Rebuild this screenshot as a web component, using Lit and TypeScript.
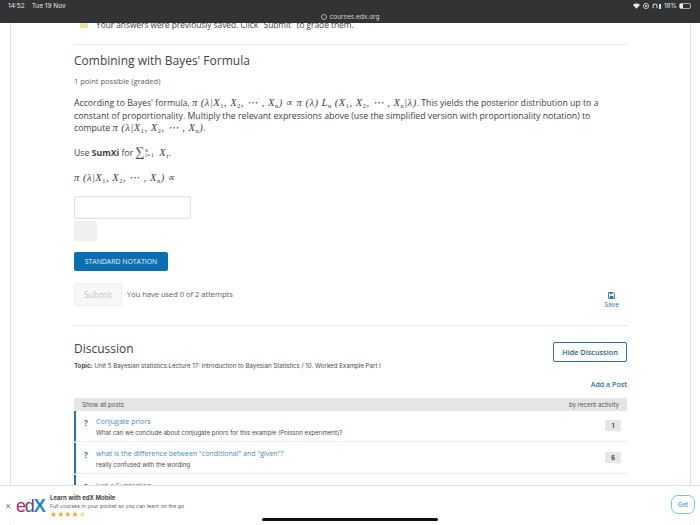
import { LitElement, css, html } from 'lit';
import { customElement } from 'lit/decorators.js';

const mathSeq = html`<span class="m">π (λ|X<sub>1</sub>, X<sub>2</sub>, ⋯ , X<sub>n</sub>)</span>`;

@customElement('app-root')
export class AppRoot extends LitElement {
  render() {
    return html`
      <div class="bar">
        <div class="status">
          <span>14:52</span><span class="date">Tue 19 Nov</span>
          <span class="status-icons">
            <svg width="7" height="6" viewBox="0 0 9 7"><path d="M0 2.2a6.4 6.4 0 0 1 9 0L4.5 7z" fill="#eee"/></svg>
            <svg width="6" height="6" viewBox="0 0 7 7"><circle cx="3.5" cy="3.5" r="3" fill="none" stroke="#ddd"/><circle cx="3.5" cy="3.5" r="1.3" fill="#ddd"/></svg>
            <svg width="6" height="6" viewBox="0 0 6 7"><path d="M.7 6V3.4a2.3 2.3 0 0 1 4.6 0V6" fill="none" stroke="#ddd" stroke-width="1.2"/></svg>
            <i class="lock"></i>
            <span>18%</span>
            <span class="batt"><i></i></span>
          </span>
        </div>
        <div class="url">
          <svg width="6" height="6" viewBox="0 0 6 6"><circle cx="3" cy="3" r="2.5" fill="none" stroke="#ccc" stroke-width=".8"/></svg>
          courses.edx.org
        </div>
      </div>

      <main class="page">
        <div class="saved">
          <svg width="8" height="8" viewBox="0 0 8 8"><rect width="8" height="8" fill="#efe3a0"/><rect x="2" y="0" width="4" height="3" fill="#fbf6da"/></svg>
          <span>Your answers were previously saved. Click "Submit" to grade them.</span>
        </div>
        <hr />
        <h2>Combining with Bayes' Formula</h2>
        <div class="points">1 point possible (graded)</div>
        <p class="body">
          According to Bayes' formula, ${mathSeq} <span class="m">∝ π (λ) L<sub>n</sub> (X<sub>1</sub>, X<sub>2</sub>, ⋯ , X<sub>n</sub>|λ)</span>. This yields the posterior distribution up to a
          constant of proportionality. Multiply the relevant expressions above (use the simplified version with proportionality notation) to
          compute ${mathSeq}.
        </p>
        <p class="use">Use <b>SumXi</b> for <span class="m"><span class="sigma">∑</span><span class="limits"><sup>n</sup><sub>i=1</sub></span> X<sub>i</sub></span>.</p>
        <p class="prop">${mathSeq} <span class="m">∝</span></p>
        <div class="input"></div>
        <div class="preview"></div>
        <button class="notation">STANDARD NOTATION</button>
        <div class="actions">
          <button class="submit">Submit</button>
          <span class="attempts">You have used 0 of 2 attempts</span>
          <span class="save">
            <svg width="7" height="7" viewBox="0 0 8 8"><path d="M.5.5h5.5l1.500 1.500v5.500h-7z" fill="none" stroke="#2d6f9f"/><rect x="2" y="4.500" width="4" height="3" fill="#2d6f9f"/><rect x="2" y=".5" width="3" height="2" fill="#2d6f9f"/></svg>
            Save
          </span>
        </div>
        <hr class="rule" />
        <div class="disc-head">
          <h2>Discussion</h2>
          <button class="hide">Hide Discussion</button>
        </div>
        <div class="topic"><b>Topic:</b> Unit 5 Bayesian statistics:Lecture 17: Introduction to Bayesian Statistics / 10. Worked Example Part I</div>
        <div class="add">Add a Post</div>
        <div class="posts">
          <div class="posts-head"><span>Show all posts</span><span>by recent activity</span></div>
          ${this.post('Conjugate priors', 'What can we conclude about conjugate priors for this example (Poisson experiment)?', '1')}
          ${this.post('what is the difference between "conditional" and "given"?', 'really confused with the wording', '6')}
          ${this.post('Just a Suggestion', '', '')}
        </div>
      </main>

      <div class="banner">
        <span class="close">×</span>
        <span class="logo"><span class="e">e</span><span class="d">d</span><span class="x">X</span></span>
        <div class="promo">
          <div class="promo-title">Learn with edX Mobile</div>
          <div class="promo-sub">Full courses in your pocket so you can learn on the go</div>
          <div class="stars">★★★★<span class="half">★</span></div>
        </div>
        <button class="get">Get</button>
      </div>
      <div class="home"></div>
    `;
  }

  private post(title: string, sub: string, count: string) {
    return html`
      <div class="post">
        <span class="q">?</span>
        <div class="post-text">
          <div class="post-title">${title}</div>
          <div class="post-sub">${sub}</div>
        </div>
        ${count ? html`<span class="count">${count}</span>` : ''}
      </div>
    `;
  }

  static styles = css`
    :host {
      display: block;
      position: relative;
      width: 700px;
      height: 525px;
      overflow: hidden;
      background: #fff;
      font-family: 'Open Sans', sans-serif;
      color: #414141;
    }

    .bar {
      position: absolute;
      top: 0;
      left: 0;
      right: 0;
      height: 23px;
      background: #323335;
      color: #ddd;
      z-index: 2;
    }
    .status {
      display: flex;
      align-items: center;
      gap: 7px;
      height: 12px;
      padding: 0 9px 0 8px;
      font: 6.5px 'Inter', sans-serif;
      color: #e4e4e4;
    }
    .status-icons {
      margin-left: auto;
      display: flex;
      align-items: center;
      gap: 3px;
    }
    .lock {
      width: 2px;
      height: 5px;
      margin-left: -2px;
      background: #ddd;
    }
    .batt {
      width: 12px;
      height: 6px;
      border: 1px solid #aaa;
      border-radius: 2px;
      margin-left: -1px;
      box-sizing: border-box;
    }
    .batt i {
      display: block;
      width: 3px;
      height: 4px;
      background: #eee;
    }
    .url {
      display: flex;
      justify-content: center;
      align-items: center;
      gap: 3px;
      height: 9px;
      font: 6.5px 'Inter', sans-serif;
      color: #d5d5d5;
    }

    .page {
      box-sizing: border-box;
      width: 681px;
      height: 525px;
      margin-left: 10px;
      padding: 18px 63px 0 63px;
      border-left: 1px solid #ddd;
      border-right: 1px solid #ddd;
    }
    .saved {
      display: flex;
      align-items: center;
      gap: 8px;
      padding-left: 6px;
      height: 12px;
      font-size: 8.3px;
      color: #414141;
    }
    hr {
      border: 0;
      border-top: 1px solid #e8e8e8;
      margin: 14px 0 0;
    }
    h2 {
      font-weight: 400;
      font-size: 12px;
      line-height: 18px;
      margin: 0;
      color: #414141;
    }
    hr + h2 {
      margin-top: 7px;
    }
    .points {
      font-size: 7.5px;
      line-height: 10px;
      color: #5c5c5c;
      margin-top: 6px;
    }
    p {
      margin: 0;
      font-size: 8.72px;
      line-height: 12.5px;
    }
    .body {
      margin-top: 11px;
    }
    .use {
      margin-top: 11px;
    }
    .prop {
      margin-top: 13px;
    }
    .m {
      font-family: 'Liberation Serif', serif;
      font-style: italic;
      font-size: 10.5px;
      letter-spacing: 0.5px;
      white-space: nowrap;
    }
    .m sub, .m sup {
      font-size: 6.5px;
      line-height: 0;
      font-style: normal;
      vertical-align: -1.5px;
    }
    .sigma {
      font-size: 13px;
      font-style: normal;
    }
    .limits {
      display: inline-flex;
      flex-direction: column;
      vertical-align: middle;
      line-height: 5px;
      margin-right: 2px;
    }
    .limits sup, .limits sub {
      font-size: 5.5px;
      line-height: 5px;
      vertical-align: baseline;
    }
    .input {
      box-sizing: border-box;
      width: 117px;
      height: 23px;
      margin-top: 11px;
      border: 1px solid #e2e2e2;
      border-radius: 2px;
      box-shadow: inset 0 0 2px #e6e6e6;
    }
    .preview {
      width: 23px;
      height: 20px;
      margin-top: 2px;
      background: #f0f0f0;
      border-radius: 2px;
    }
    button {
      font-family: inherit;
      padding: 0;
      box-sizing: border-box;
    }
    .notation {
      display: block;
      width: 94px;
      height: 19px;
      margin-top: 11px;
      border: 0;
      border-radius: 2px;
      background: #0a6fb0;
      color: #e6f0f7;
      font-size: 6.9px;
    }
    .actions {
      display: flex;
      align-items: center;
      height: 24px;
      margin-top: 12px;
    }
    .submit {
      width: 48px;
      height: 23px;
      background: #f7f7f7;
      border: 1px solid #eee;
      border-radius: 2px;
      color: #c4c4c4;
      font-size: 8.5px;
    }
    .attempts {
      margin-left: 5px;
      font-size: 7.5px;
      color: #5c5c5c;
      margin-top: -1px;
    }
    .save {
      margin-left: auto;
      margin-right: 8px;
      margin-top: 12px;
      display: flex;
      flex-direction: column;
      align-items: center;
      gap: 1px;
      font-size: 6.8px;
      line-height: 9px;
      color: #2d6f9f;
    }
    hr.rule {
      margin-top: 18px;
    }
    .disc-head {
      display: flex;
      justify-content: space-between;
      align-items: center;
      margin-top: 16px;
      height: 21px;
    }
    .disc-head h2 {
      margin-bottom: 6px;
    }
    .hide {
      width: 74px;
      height: 20px;
      background: #fff;
      border: 1px solid #2d6f9f;
      border-radius: 2px;
      color: #23608c;
      font-size: 7.3px;
      font-weight: 600;
    }
    .topic {
      margin-top: -1px;
      font: 6.15px/8px 'Inter', sans-serif;
      color: #4a4a4a;
    }
    .add {
      margin-top: 9px;
      text-align: right;
      font-size: 7.1px;
      line-height: 10px;
      font-weight: 600;
      color: #2d6f9f;
    }
    .posts {
      margin-top: 9px;
    }
    .posts-head {
      display: flex;
      justify-content: space-between;
      align-items: center;
      height: 13px;
      padding: 0 8px;
      background: #e5e5e5;
      font: 6.15px 'Inter', sans-serif;
      color: #555;
    }
    .post {
      display: flex;
      height: 31px;
      margin-bottom: 1px;
      box-sizing: border-box;
      border-left: 2px solid #2d6f9f;
      border-bottom: 1px solid #eee;
    }
    .q {
      width: 20px;
      padding: 6px 0 0 8px;
      box-sizing: border-box;
      font-size: 8px;
      font-weight: 700;
      color: #2d6f9f;
    }
    .post-text {
      flex: 1;
      padding-top: 5px;
    }
    .post-title {
      font-size: 7.05px;
      line-height: 11px;
      color: #4a8ab5;
    }
    .post-sub {
      margin-top: 2px;
      font: 6.1px/8px 'Inter', sans-serif;
      color: #4a4a4a;
    }
    .count {
      position: relative;
      align-self: flex-start;
      width: 16px;
      height: 11px;
      margin: 9px 6px 0 0;
      background: #e6e6e6;
      border-radius: 1px;
      text-align: center;
      font: 700 5.7px/11px 'Inter', sans-serif;
    }
    .count::after {
      content: '';
      position: absolute;
      right: 2px;
      bottom: -2px;
      border-top: 2px solid #e6e6e6;
      border-left: 2px solid transparent;
    }

    .banner {
      position: absolute;
      left: 0;
      right: 0;
      bottom: 1px;
      height: 39px;
      display: flex;
      align-items: center;
      background: #fff;
      border-top: 1px solid #ddd;
      box-sizing: border-box;
      padding-top: 2px;
    }
    .close {
      width: 16px;
      text-align: center;
      font-size: 10px;
      color: #777;
    }
    .logo {
      display: flex;
      width: 27px;
      font: 400 18px/1 'Liberation Sans', sans-serif;
      letter-spacing: -1.2px;
    }
    .e { color: #b02a6e; }
    .d { color: #5d4a7a; }
    .x { color: #1e87bd; font-weight: 700; }
    .promo {
      margin-left: 7px;
      flex: 1;
    }
    .promo-title {
      font: 700 6px/8px 'Inter', sans-serif;
      color: #444;
    }
    .promo-sub {
      font: 5.25px/8px 'Inter', sans-serif;
      color: #666;
    }
    .stars {
      font: 8px/9px 'DejaVu Sans', sans-serif;
      color: #f2ac3a;
    }
    .half { color: #f7d79c; }
    .get {
      width: 24px;
      height: 19px;
      margin-right: 5px;
      margin-top: -3px;
      background: #fff;
      border: 1px solid #7fc4d8;
      border-radius: 7px;
      color: #5cb3cf;
      font: 700 5.8px 'Inter', sans-serif;
    }
    .home {
      position: absolute;
      left: 262px;
      bottom: 4px;
      width: 176px;
      height: 3px;
      border-radius: 2px;
      background: #111;
    }
  `;
}
